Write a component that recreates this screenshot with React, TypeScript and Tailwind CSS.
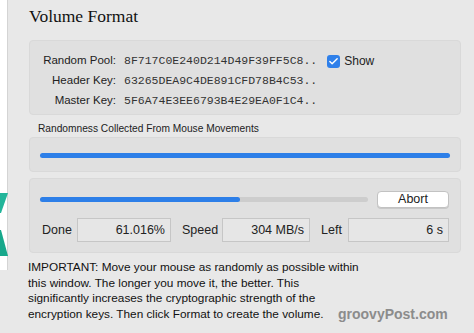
import { Check } from 'lucide-react'

const sans = { fontFamily: '"Liberation Sans", Arial, sans-serif' }

const keys = [
  { label: 'Random Pool:', value: '8F717C0E240D214D49F39FF5C8..' },
  { label: 'Header Key:', value: '63265DEA9C4DE891CFD78B4C53..' },
  { label: 'Master Key:', value: '5F6A74E3EE6793B4E29EA0F1C4..' },
]

const notice = [
  'IMPORTANT: Move your mouse as randomly as possible within',
  'this window. The longer you move it, the better. This',
  'significantly increases the cryptographic strength of the',
  'encryption keys. Then click Format to create the volume.',
]

function Field({ value, width }: { value: string; width: string }) {
  return (
    <div
      className={`${width} flex h-[24px] items-center justify-end border border-[#c6c6c6] bg-[#e6e6e6] pr-[5px] text-[12.5px] text-[#222]`}
    >
      {value}
    </div>
  )
}

export default function App() {
  return (
    <div className="flex h-[333px] w-[474px] overflow-hidden bg-[#e8e8e8] text-[#222]" style={sans}>
      {/* strip of the page behind the window */}
      <div className="w-[8px] shrink-0">
        <div className="relative h-[270px] border-r border-[#d4d4d4] bg-white">
          <svg className="absolute left-0 top-[192px]" width="8" height="66" viewBox="0 0 8 66">
            <polygon points="0,1 8,1 1,21 0,21" fill="#22b59a" />
            <polygon points="0,38 1,38 8,64 0,64" fill="#17a88b" />
          </svg>
        </div>
      </div>

      <div className="relative flex-1 pl-[21px] pr-[13px]">
        <h1
          className="mt-[6px] text-[17.5px] leading-[20px] text-[#111]"
          style={{ fontFamily: '"Liberation Serif", "Times New Roman", serif' }}
        >
          Volume Format
        </h1>

        {/* keys */}
        <div className="mt-[14px] h-[75px] rounded-[4px] border border-[#d9d9d9] bg-[#e0e0e0] pt-[10px]">
          {keys.map((k, i) => (
            <div key={k.label} className="flex h-[20px] items-center">
              <span className="w-[86px] shrink-0 text-right text-[11.5px]">{k.label}</span>
              <span
                className="ml-[8px] text-[11.5px] text-[#333]"
                style={{ fontFamily: '"Liberation Mono", "Courier New", monospace' }}
              >
                {k.value}
              </span>
              {i === 0 && (
                <span className="ml-[10px] flex items-center gap-[4px] text-[12px]">
                  <span className="flex h-[13px] w-[13px] items-center justify-center rounded-[3px] bg-[#2f80ea]">
                    <Check size={11} strokeWidth={3} className="text-white" />
                  </span>
                  Show
                </span>
              )}
            </div>
          ))}
        </div>

        <p className="ml-[9px] mt-[8px] text-[10.2px] leading-[12px]">
          Randomness Collected From Mouse Movements
        </p>

        <div className="mt-[2px] h-[35px] rounded-[4px] border border-[#d9d9d9] bg-[#e0e0e0] px-[10px] pt-[15px]">
          <div className="h-[5px] rounded-full bg-[#2d7fe8]" />
        </div>

        {/* progress */}
        <div className="mt-[6px] h-[75px] rounded-[4px] border border-[#d9d9d9] bg-[#e0e0e0] pl-[10px] pr-[11px] pt-[12px]">
          <div className="flex h-[17px] items-center">
            <div className="h-[5px] w-[328px] rounded-full bg-[#cdcdcd]">
              <div className="h-[5px] w-[61%] rounded-full bg-[#2d7fe8]" />
            </div>
            <button className="ml-[9px] h-[17px] w-[72px] rounded-[4px] border border-[#c2c2c2] bg-white text-[12.5px] leading-[15px] text-[#222] shadow-[0_1px_0_#c8c8c8]">
              Abort
            </button>
          </div>
          <div className="mt-[10px] flex items-center text-[12.5px]">
            <span className="ml-[2px] w-[35px]">Done</span>
            <Field value="61.016%" width="w-[94px]" />
            <span className="ml-[11px] w-[40px]">Speed</span>
            <Field value="304 MB/s" width="w-[88px]" />
            <span className="ml-[11px] w-[27px]">Left</span>
            <Field value="6 s" width="w-[101px]" />
          </div>
        </div>

        <div className="-ml-[1px] mt-[7px] text-[11.8px] leading-[15.5px] text-[#111]">
          {notice.map((line) => (
            <div key={line}>{line}</div>
          ))}
        </div>

        {/* watermark */}
        <span className="absolute left-[330px] top-[304px] text-[14px] font-bold text-[#8c8c8c]">
          groovyPost.com
        </span>
      </div>
    </div>
  )
}
